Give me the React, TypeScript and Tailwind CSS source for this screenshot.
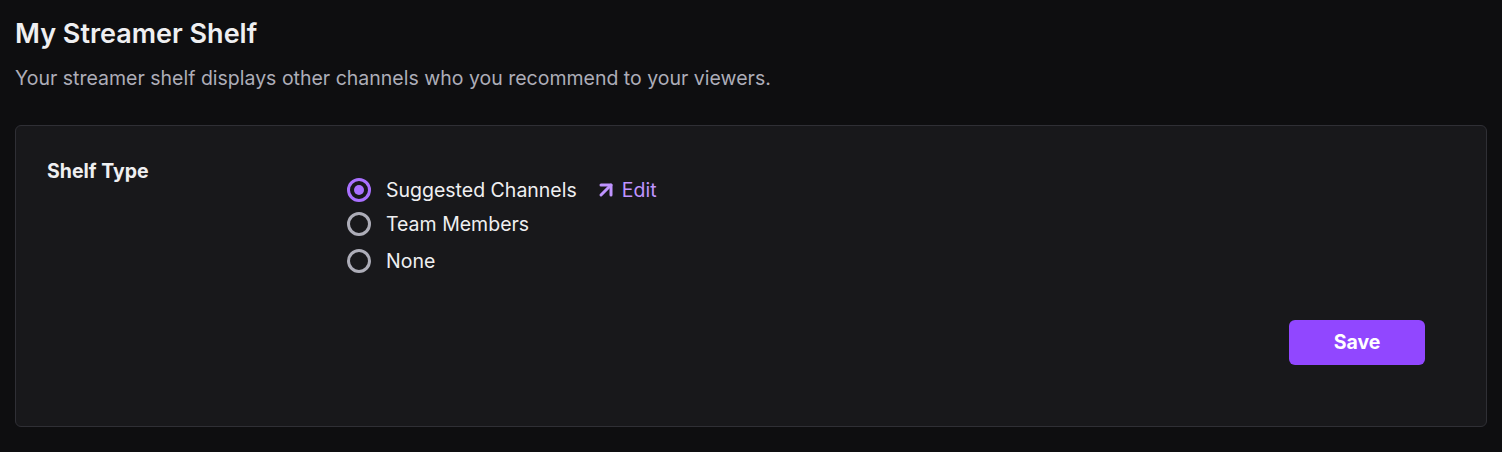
import { ArrowUpRight } from "lucide-react";

const options = [
  { label: "Suggested Channels", checked: true, edit: true },
  { label: "Team Members", checked: false, edit: false },
  { label: "None", checked: false, edit: false },
];

function Radio({ checked }: { checked: boolean }) {
  return (
    <span
      className={`flex h-6 w-6 shrink-0 items-center justify-center rounded-full border-[3px] ${
        checked ? "border-[#a970ff]" : "border-[#adadb8]"
      }`}
    >
      {checked && <span className="h-[10px] w-[10px] rounded-full bg-[#a970ff]" />}
    </span>
  );
}

export default function App() {
  return (
    <div className="min-h-[452px] bg-[#0e0e10] px-[15px] pt-[18px] font-['Inter',sans-serif] text-[#efeff1]">
      <h1 className="text-[27px] font-semibold leading-[32px]">My Streamer Shelf</h1>
      <p className="mt-[16px] text-[19.5px] leading-[24px] text-[#adadb8]">
        Your streamer shelf displays other channels who you recommend to your viewers.
      </p>

      <section className="mt-[35px] h-[302px] rounded-[6px] border border-[#2f2f35] bg-[#18181b] pl-[31px] pr-[61px] pt-[33px]">
        <div className="flex">
          <h2 className="w-[300px] shrink-0 text-[19.5px] font-bold leading-[24px]">Shelf Type</h2>
          <div className="flex flex-col pt-[19px]">
            {options.map((option, i) => (
              <label
                key={option.label}
                className={`flex items-center gap-[15px] ${i === 0 ? "" : i === 1 ? "mt-[10px]" : "mt-[13px]"}`}
              >
                <Radio checked={option.checked} />
                <span className="text-[19.5px] leading-[24px]">{option.label}</span>
                {option.edit && (
                  <a className="ml-[2px] flex items-center gap-[4px] text-[19.5px] leading-[24px] text-[#bf94ff]">
                    <ArrowUpRight className="h-6 w-6" strokeWidth={3} />
                    Edit
                  </a>
                )}
              </label>
            ))}
          </div>
        </div>
        <div className="mt-[47px] flex justify-end">
          <button
            type="button"
            className="h-[45px] w-[136px] rounded-[6px] bg-[#9147ff] text-[19.5px] font-bold text-white"
          >
            Save
          </button>
        </div>
      </section>
    </div>
  );
}
